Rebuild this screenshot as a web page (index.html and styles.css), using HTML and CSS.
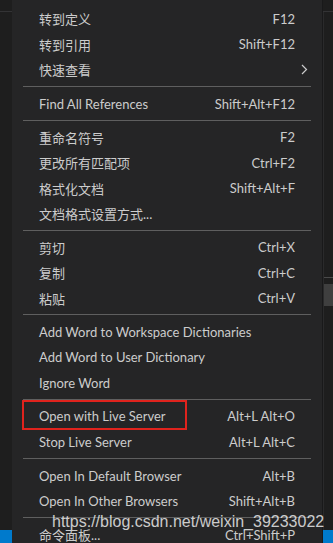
FILE: index.html
```html
<!DOCTYPE html>
<html lang="zh-CN">
<head>
<meta charset="utf-8">
<title>Context menu</title>
<link rel="stylesheet" href="styles.css">
</head>
<body>
<div class="app">
  <div class="side side-left">
    <div class="side-top"></div>
    <div class="side-fill"></div>
    <div class="status"></div>
  </div>
  <div class="menu">
    <div class="item"><span class="label">转到定义</span><span class="key">F12</span></div>
    <div class="item"><span class="label">转到引用</span><span class="key">Shift+F12</span></div>
    <div class="item"><span class="label">快速查看</span><span class="key chev"><svg width="7" height="11" viewBox="0 0 7 11"><path d="M1 1 L5.5 5.5 L1 10" fill="none" stroke="#cccccc" stroke-width="1.2"/></svg></span></div>
    <div class="sep"></div>
    <div class="item"><span class="label">Find All References</span><span class="key">Shift+Alt+F12</span></div>
    <div class="sep"></div>
    <div class="item"><span class="label">重命名符号</span><span class="key">F2</span></div>
    <div class="item"><span class="label">更改所有匹配项</span><span class="key">Ctrl+F2</span></div>
    <div class="item"><span class="label">格式化文档</span><span class="key">Shift+Alt+F</span></div>
    <div class="item"><span class="label">文档格式设置方式...</span><span class="key"></span></div>
    <div class="sep"></div>
    <div class="item"><span class="label">剪切</span><span class="key">Ctrl+X</span></div>
    <div class="item"><span class="label">复制</span><span class="key">Ctrl+C</span></div>
    <div class="item"><span class="label">粘贴</span><span class="key">Ctrl+V</span></div>
    <div class="sep"></div>
    <div class="item"><span class="label">Add Word to Workspace Dictionaries</span><span class="key"></span></div>
    <div class="item"><span class="label">Add Word to User Dictionary</span><span class="key"></span></div>
    <div class="item"><span class="label">Ignore Word</span><span class="key"></span></div>
    <div class="sep"></div>
    <div class="item"><span class="label">Open with Live Server</span><span class="key">Alt+L Alt+O</span></div>
    <div class="item"><span class="label">Stop Live Server</span><span class="key">Alt+L Alt+C</span></div>
    <div class="sep"></div>
    <div class="item"><span class="label">Open In Default Browser</span><span class="key">Alt+B</span></div>
    <div class="item"><span class="label">Open In Other Browsers</span><span class="key">Shift+Alt+B</span></div>
    <div class="sep"></div>
    <div class="item"><span class="label">命令面板...</span><span class="key">Ctrl+Shift+P</span></div>
    <div class="highlight"></div>
  </div>
  <div class="side side-right">
    <div class="side-top"></div>
    <div class="side-fill">
      <div class="rule"></div>
      <div class="thumb"></div>
    </div>
    <div class="status"></div>
  </div>
  <div class="watermark">https://blog.csdn.net/weixin_39233022</div>
</div>
</body>
</html>
```

FILE: styles.css
```css
html, body {
  margin: 0;
  padding: 0;
  background: #1e1e1e;
}
.app {
  position: relative;
  display: flex;
  width: 333px;
  height: 543px;
  overflow: hidden;
  font-family: "Lato", "Noto Sans CJK SC", sans-serif;
  font-size: 13px;
  color: #cccccc;
}
.side {
  display: flex;
  flex-direction: column;
  background: #1e1e1e;
}
.side-left {
  width: 12px;
}
.side-right {
  width: 11px;
  border-left: 1px solid #19191a;
  box-sizing: border-box;
}
.side-top {
  height: 11px;
  border-bottom: 1px solid #333335;
}
.side-fill {
  flex: 1;
  display: flex;
  flex-direction: column;
}
.side-right .side-fill {
  border-left: 1px solid #2a2a2b;
}
.rule {
  margin-top: 265px;
  height: 1px;
  background: #4a4a4a;
}
.thumb {
  margin-top: 6px;
  height: 22px;
  background: #3f3f3f;
}
.status {
  height: 13px;
  background: #007acc;
}
.menu {
  position: relative;
  width: 310px;
  background: #252526;
  padding-top: 6.3px;
  box-sizing: border-box;
}
.item {
  display: flex;
  align-items: center;
  justify-content: space-between;
  height: 25.4px;
  padding: 0 27px;
  white-space: nowrap;
}
.key {
  display: flex;
  align-items: center;
}
.chev {
  margin-right: -13px;
}
.sep {
  display: flex;
  align-items: center;
  height: 8.4px;
  padding: 0 11px;
}
.sep::before {
  content: "";
  flex: 1;
  height: 1px;
  background: #5f5f5f;
}
.highlight {
  position: absolute;
  left: 10px;
  top: 400px;
  width: 165px;
  height: 30px;
  border: 2px solid #e0231d;
  box-sizing: border-box;
}
.watermark {
  position: absolute;
  left: 52px;
  top: 513px;
  font-family: "Liberation Sans", Arial, sans-serif;
  font-size: 16px;
  color: rgba(235, 235, 235, 0.85);
  white-space: nowrap;
}
```
